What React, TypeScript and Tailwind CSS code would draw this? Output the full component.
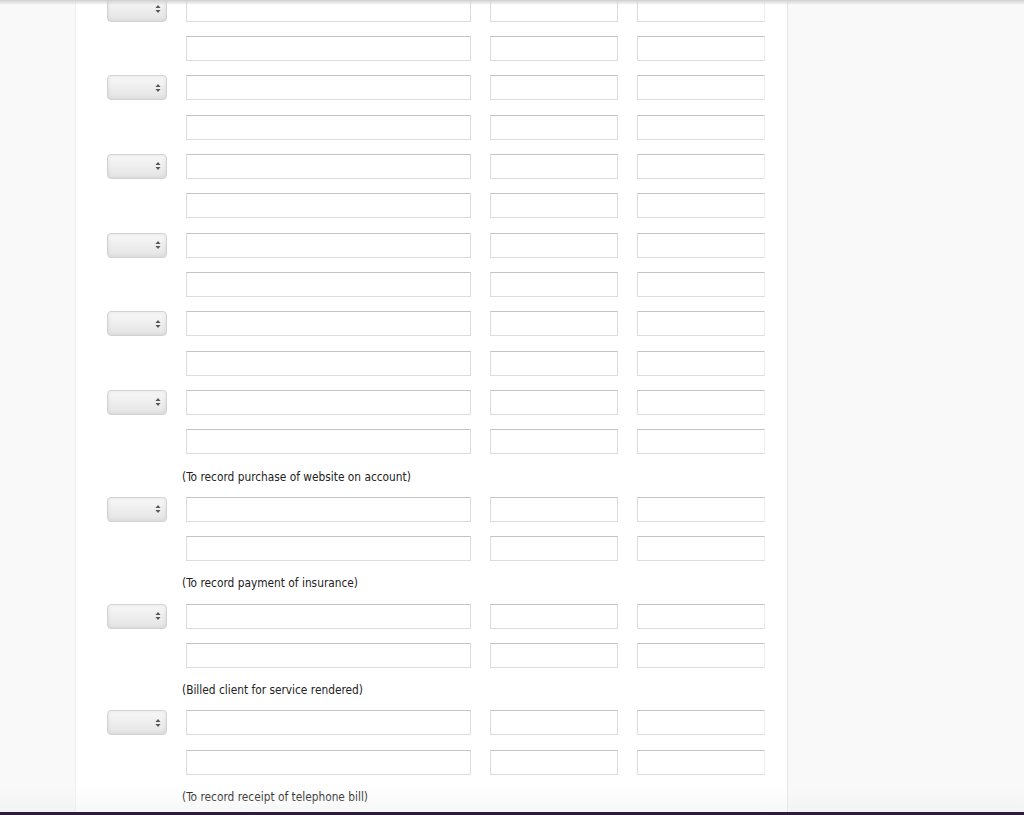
import React from 'react';

type Group = { note?: string };

const groups: Group[] = [
  {}, {}, {}, {}, {},
  { note: '(To record purchase of website on account)' },
  { note: '(To record payment of insurance)' },
  { note: '(Billed client for service rendered)' },
  { note: '(To record receipt of telephone bill)' },
];

const Field: React.FC<{ w: string }> = ({ w }) => (
  <input
    type="text"
    className={`${w} h-[25px] bg-white border border-[#dcdcdc] border-t-[#c4c4c4] outline-none`}
  />
);

const SelectBox: React.FC = () => (
  <div className="w-[60px] h-[25px] rounded-[4px] border border-[#d2d2d2] bg-gradient-to-b from-[#f8f8f8] to-[#e4e4e4] shadow-[inset_0_0_4px_rgba(0,0,0,0.08)] flex items-center justify-end pr-[5px]">
    <svg width="6" height="10" viewBox="0 0 6 10">
      <path d="M3 1 L5.5 4 L0.5 4 Z" fill="#555" />
      <path d="M3 9 L5.5 6 L0.5 6 Z" fill="#555" />
    </svg>
  </div>
);

const Row: React.FC<{ withSelect?: boolean }> = ({ withSelect }) => (
  <div className="h-[39.33px] flex items-start gap-[19px]">
    {withSelect ? <SelectBox /> : <div className="w-[60px] shrink-0" />}
    <Field w="w-[285px]" />
    <Field w="w-[128px]" />
    <Field w="w-[128px] border-r-[#eeeeee]" />
  </div>
);

const App: React.FC = () => {
  return (
    <div className="relative h-[815px] overflow-hidden bg-[#f9f9f9]" style={{ fontFamily: '"DejaVu Sans Condensed", "Liberation Sans", sans-serif' }}>
      <div className="ml-[75px] w-[713px] h-full bg-white border-l border-[#f0f0f0] border-r border-r-[#e6e6e6] overflow-hidden">
        <div className="pl-[31px] mt-[-3.33px]">
          {groups.map((g, i) => (
            <div key={i}>
              <Row withSelect />
              <Row />
              {g.note && (
                <div className="h-[28.2px] pl-[75px] pt-[1px] text-[11.8px] leading-[14px] text-[#222]">
                  {g.note}
                </div>
              )}
            </div>
          ))}
        </div>
      </div>
      {/* top shadow */}
      <div className="absolute top-0 left-0 right-0 h-[5px] bg-gradient-to-b from-[#cfcfcf] to-transparent pointer-events-none" />
      {/* bottom fade */}
      <div className="absolute bottom-[3px] left-0 right-0 h-[25px] bg-gradient-to-b from-transparent to-[#ebebeb]/40 pointer-events-none" />
      <div className="absolute bottom-0 left-0 right-0 h-[3px] bg-[#2d1c3b]" />
    </div>
  );
};

export default App;
